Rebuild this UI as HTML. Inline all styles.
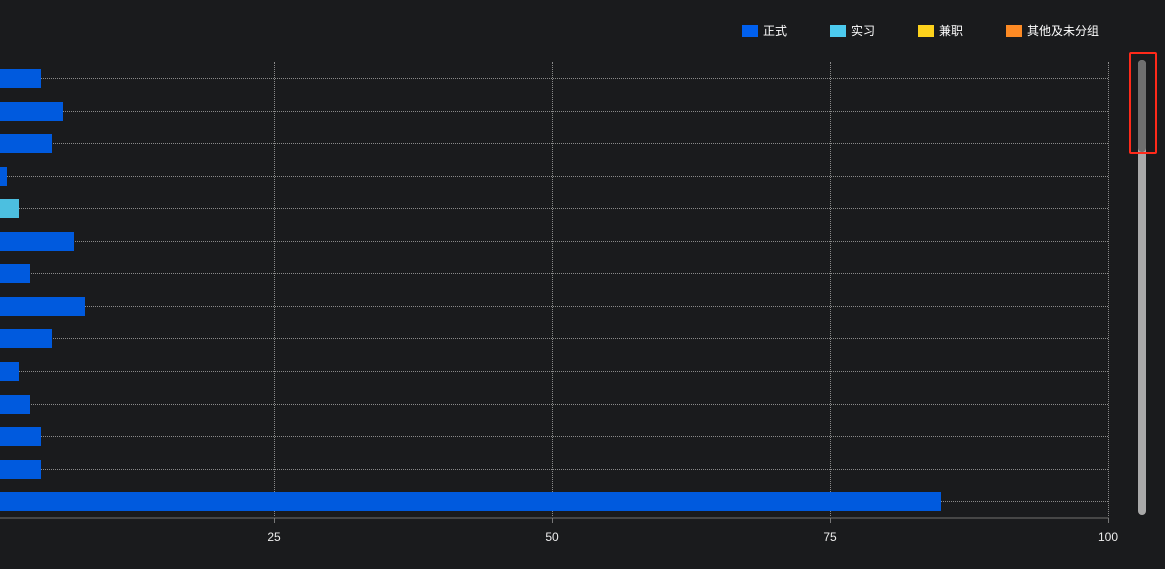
<!DOCTYPE html>
<html><head><meta charset="utf-8"><style>
body{margin:0;width:1165px;height:569px;background:#1a1b1d;overflow:hidden;position:relative;font-family:"Liberation Sans","Noto Sans CJK SC",sans-serif;color:#fff}
.a{position:absolute}
.lg{position:absolute;top:24px;font-size:12px;line-height:14px}
.lg i{display:inline-block;width:16px;height:12px;vertical-align:-2px;margin-right:5px}
.h{position:absolute;left:0;width:1108px;height:0;border-top:1px dotted #8a8a8a}
.v{position:absolute;top:62px;height:456px;width:0;border-left:1px dotted #8a8a8a}
.b{position:absolute;left:0;height:19px;background:#005ade}
.t{position:absolute;top:530px;font-size:12px;width:40px;text-align:center;color:#eee}
</style></head><body>
<div class="lg" style="left:742px"><i style="background:#0060ef"></i>正式</div>
<div class="lg" style="left:830px"><i style="background:#4ccaee"></i>实习</div>
<div class="lg" style="left:918px"><i style="background:#fdd21c"></i>兼职</div>
<div class="lg" style="left:1006px"><i style="background:#fd8a24"></i>其他及未分组</div>

<div class="v" style="left:274px"></div>
<div class="v" style="left:552px"></div>
<div class="v" style="left:830px"></div>
<div class="v" style="left:1108px"></div>

<div class="h" style="top:78px"></div><div class="h" style="top:111px"></div><div class="h" style="top:143px"></div><div class="h" style="top:176px"></div><div class="h" style="top:208px"></div><div class="h" style="top:241px"></div><div class="h" style="top:273px"></div><div class="h" style="top:306px"></div><div class="h" style="top:338px"></div><div class="h" style="top:371px"></div><div class="h" style="top:404px"></div><div class="h" style="top:436px"></div><div class="h" style="top:469px"></div><div class="h" style="top:501px"></div>

<div class="b" style="top:69px;width:41px"></div>
<div class="b" style="top:102px;width:63px"></div>
<div class="b" style="top:134px;width:52px"></div>
<div class="b" style="top:167px;width:7px"></div>
<div class="b" style="top:199px;width:19px;background:#4cbfe0"></div>
<div class="b" style="top:232px;width:74px"></div>
<div class="b" style="top:264px;width:30px"></div>
<div class="b" style="top:297px;width:85px"></div>
<div class="b" style="top:329px;width:52px"></div>
<div class="b" style="top:362px;width:19px"></div>
<div class="b" style="top:395px;width:30px"></div>
<div class="b" style="top:427px;width:41px"></div>
<div class="b" style="top:460px;width:41px"></div>
<div class="b" style="top:492px;width:941px"></div>

<div class="a" style="left:0;top:517px;width:1109px;height:2px;background:#464646"></div>
<div class="a" style="left:274px;top:518px;width:1px;height:5px;background:#777"></div>
<div class="a" style="left:552px;top:518px;width:1px;height:5px;background:#777"></div>
<div class="a" style="left:830px;top:518px;width:1px;height:5px;background:#777"></div>
<div class="a" style="left:1108px;top:518px;width:1px;height:5px;background:#777"></div>
<div class="t" style="left:254px">25</div>
<div class="t" style="left:532px">50</div>
<div class="t" style="left:810px">75</div>
<div class="t" style="left:1088px">100</div>

<div class="a" style="left:1138px;top:60px;width:8px;height:455px;background:#a9a9a9;border-radius:4px"></div>
<div class="a" style="left:1138px;top:60px;width:8px;height:92px;background:#6f6f6f;border-radius:4px"></div>
<div class="a" style="left:1129px;top:52px;width:24px;height:98px;border:2px solid #ff2a1a;border-radius:2px"></div>
</body></html>
